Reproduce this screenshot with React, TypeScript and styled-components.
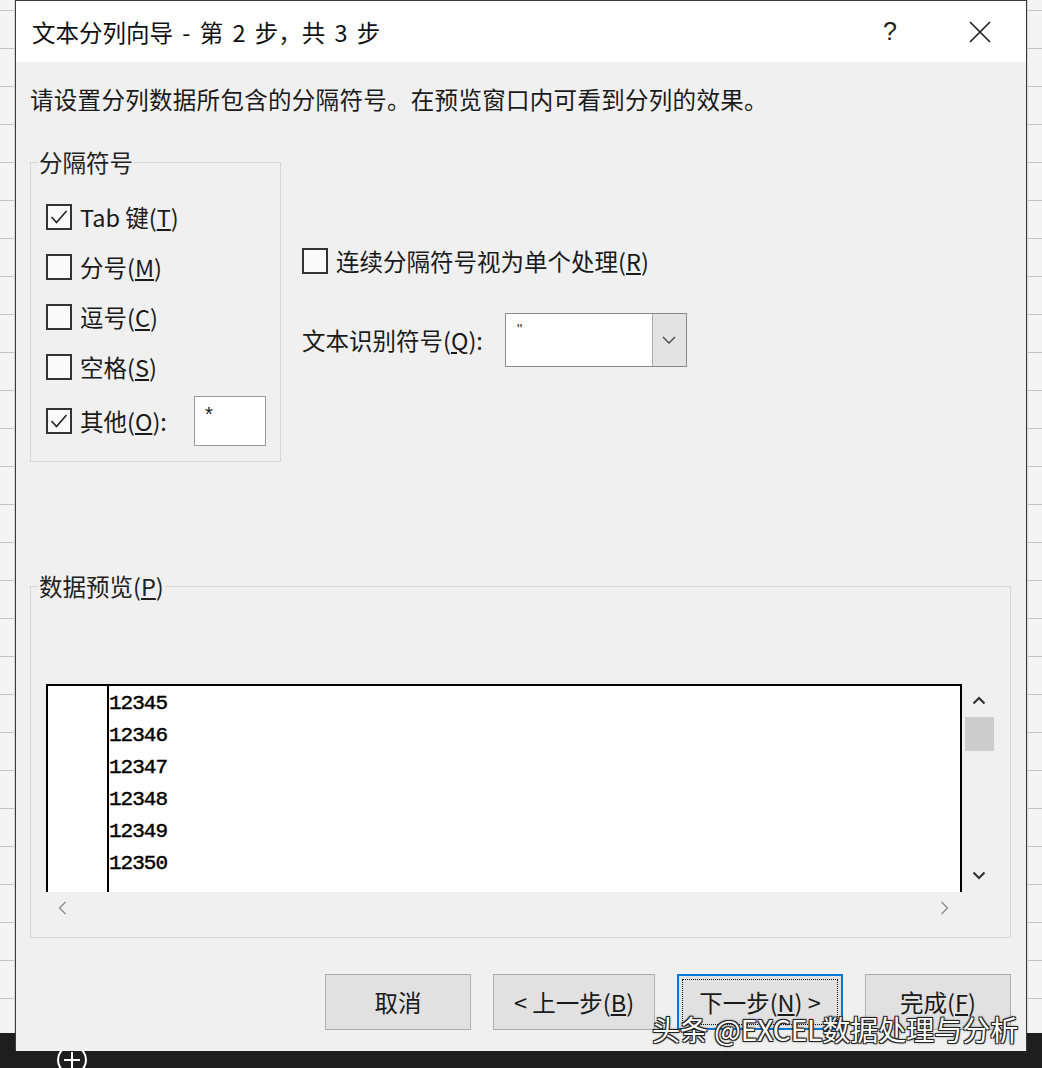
import React from 'react'
import styled, { createGlobalStyle } from 'styled-components'

const CJK = `"Noto Sans CJK SC", "Noto Sans", sans-serif`

const GlobalStyle = createGlobalStyle`
  html, body {
    margin: 0;
    padding: 0;
  }
  body {
    width: 1042px;
    height: 1068px;
    overflow: hidden;
    background: #1e1e1e;
    font-family: ${CJK};
    color: #1a1a1a;
  }
`

const Screen = styled.div`
  position: relative;
  width: 1042px;
  height: 1068px;
  display: flex;
  flex-direction: column;
  overflow: hidden;
`

const Workspace = styled.div`
  display: flex;
  align-items: flex-start;
  height: 1051px;
`

// bits of the spreadsheet grid peeking out on either side of the dialog
const SheetStrip = styled.div<{ $side: 'left' | 'right' }>`
  width: 15px;
  height: 1033px;
  box-sizing: border-box;
  background-color: #f4f4f4;
  background-image: linear-gradient(to bottom, #c4c4c4 0 1px, transparent 1px);
  background-size: 100% 38px;
  background-position: 0 10px;
  ${(p) => (p.$side === 'left' ? 'border-right: 1px solid #d6d6d6;' : 'border-left: 1px solid #d6d6d6;')}
`

const Dialog = styled.div`
  width: 1012px;
  height: 1051px;
  box-sizing: border-box;
  border: 1px solid #3a3a3a;
  border-bottom: none;
  background: #f0f0f0;
  display: flex;
  flex-direction: column;
`

const TitleBar = styled.div`
  height: 61px;
  flex: none;
  background: #fff;
  display: flex;
  align-items: center;
  padding: 0 23px 0 16px;
`

const Title = styled.div`
  font-size: 23.5px;
  line-height: 30px;
  word-spacing: 4px;
  color: #111;
`

const TitleActions = styled.div`
  margin-left: auto;
  display: flex;
  gap: 44px;
`

const TitleButton = styled.div`
  width: 46px;
  height: 40px;
  display: flex;
  align-items: center;
  justify-content: center;
  font-family: "Liberation Sans", sans-serif;
  font-size: 25px;
  color: #222;
`

const Body = styled.div`
  flex: 1;
  display: flex;
  flex-direction: column;
  padding: 0 15px 0 14px;
`

const Intro = styled.div`
  margin-top: 21px;
  font-size: 23.5px;
  line-height: 32px;
  letter-spacing: 0.3px;
  color: #1a1a1a;
`

const TopRow = styled.div`
  display: flex;
  align-items: flex-start;
  margin-top: 33px;
`

const GroupBox = styled.fieldset<{ $width: number }>`
  margin: 0;
  padding: 0;
  min-width: 0;
  width: ${(p) => p.$width}px;
  box-sizing: border-box;
  border: 1px solid #d6d6d6;
`

const GroupLegend = styled.legend`
  margin-left: 7px;
  padding: 0 1px;
  font-size: 23.5px;
  line-height: 28px;
  color: #222;
`

const Options = styled.div`
  padding: 16px 14px 11px 15px;
`

const CheckRow = styled.div<{ $height?: number }>`
  display: flex;
  align-items: center;
  height: ${(p) => p.$height ?? 50}px;
  font-size: 23.5px;
  line-height: 28px;
  color: #1a1a1a;
  white-space: nowrap;
`

const Box = styled.span`
  width: 26px;
  height: 26px;
  flex: none;
  box-sizing: border-box;
  border: 2px solid #333;
  background: #fafafa;
  display: flex;
  align-items: center;
  justify-content: center;
  margin-right: 8px;
`

const OtherField = styled.div`
  margin-left: auto;
  width: 72px;
  height: 50px;
  box-sizing: border-box;
  border: 1px solid #9a9a9a;
  background: #fff;
  padding: 6px 10px;
  font-family: "Liberation Sans", sans-serif;
  font-size: 20px;
  line-height: 22px;
`

const RightCol = styled.div`
  margin-left: 21px;
  padding-top: 93px;
  display: flex;
  flex-direction: column;
`

const FieldRow = styled.div`
  display: flex;
  align-items: center;
  margin-top: 32px;
  font-size: 23.5px;
  line-height: 28px;
  white-space: nowrap;
`

const Combo = styled.div`
  margin-left: 22px;
  width: 182px;
  height: 54px;
  box-sizing: border-box;
  border: 1px solid #8a8a8a;
  background: #fff;
  display: flex;
`

const ComboValue = styled.div`
  flex: 1;
  padding: 6px 0 0 11px;
  font-family: "Liberation Sans", sans-serif;
  font-size: 15px;
  line-height: 18px;
  color: #333;
`

const ComboButton = styled.div`
  width: 33px;
  background: #e3e3e3;
  border-left: 1px solid #a9a9a9;
  display: flex;
  align-items: center;
  justify-content: center;
`

const PreviewBox = styled(GroupBox)`
  margin-top: 110px;
`

const PreviewInner = styled.div`
  padding: 84px 14px 13px 15px;
`

const PreviewFrame = styled.div`
  display: grid;
  grid-template-columns: 916px 34px;
  grid-template-rows: 208px 32px;
`

const DataArea = styled.div`
  box-sizing: border-box;
  border: 2px solid #000;
  border-bottom: none;
  background: #fff;
  display: flex;
  overflow: hidden;
`

const Gutter = styled.div`
  width: 59px;
  flex: none;
  border-right: 2px solid #000;
`

const Values = styled.div`
  padding-top: 2px;
  font-family: "Liberation Mono", monospace;
  font-size: 21px;
  line-height: 32px;
  letter-spacing: -1px;
  -webkit-text-stroke: 0.45px #000;
  color: #000;
`

const VScroll = styled.div`
  display: flex;
  flex-direction: column;
  align-items: center;
`

const ScrollArrow = styled.div<{ $height: number }>`
  height: ${(p) => p.$height}px;
  display: flex;
  align-items: center;
  justify-content: center;
`

const Thumb = styled.div`
  width: 29px;
  height: 34px;
  background: #cdcdcd;
`

const ScrollSpacer = styled.div`
  flex: 1;
`

const HScroll = styled.div`
  display: flex;
  align-items: center;
  justify-content: space-between;
  padding: 0 13px 0 12px;
`

const ButtonRow = styled.div`
  margin-top: 36px;
  display: flex;
  justify-content: flex-end;
  gap: 22px;
`

const Button = styled.div<{ $width: number; $focused?: boolean }>`
  width: ${(p) => p.$width}px;
  height: 56px;
  box-sizing: border-box;
  display: flex;
  background: #e1e1e1;
  border: ${(p) => (p.$focused ? '2px solid #0078d7' : '1px solid #adadad')};
  padding: ${(p) => (p.$focused ? '3px' : '4px')};
  font-size: 23.5px;
  line-height: 28px;
  color: #1a1a1a;
  white-space: nowrap;
`

const ButtonFace = styled.span<{ $focused?: boolean }>`
  flex: 1;
  display: flex;
  align-items: center;
  justify-content: center;
  border: 1px ${(p) => (p.$focused ? 'dotted #111' : 'solid transparent')};
`

const Watermark = styled.div`
  position: absolute;
  left: 652px;
  top: 1012px;
  font-size: 28px;
  line-height: 34px;
  color: #fff;
  white-space: nowrap;
  text-shadow: 1px 1px 0 #222, -1px -1px 0 #222, 1px -1px 0 #222, -1px 1px 0 #222, 0 0 3px #000;
`

const TaskBar = styled.div`
  height: 17px;
  background: #1e1e1e;
  padding-left: 56px;
  display: flex;
`

const Check = () => (
  <svg width="18" height="16" viewBox="0 0 18 16">
    <polyline points="1.5,8 6.5,13.5 16.5,2" fill="none" stroke="#222" strokeWidth="1.6" />
  </svg>
)

const CheckBox = ({ checked }: { checked?: boolean }) => <Box>{checked && <Check />}</Box>

const rows = ['12345', '12346', '12347', '12348', '12349', '12350']

const App = () => {
  return (
    <Screen>
      <GlobalStyle />
      <Workspace>
        <SheetStrip $side="left" />
        <Dialog>
          <TitleBar>
            <Title>文本分列向导 - 第 2 步，共 3 步</Title>
            <TitleActions>
              <TitleButton>?</TitleButton>
              <TitleButton>
                <svg width="22" height="22" viewBox="0 0 22 22">
                  <path d="M1 1 L21 21 M21 1 L1 21" stroke="#1a1a1a" strokeWidth="1.6" />
                </svg>
              </TitleButton>
            </TitleActions>
          </TitleBar>

          <Body>
            <Intro>请设置分列数据所包含的分隔符号。在预览窗口内可看到分列的效果。</Intro>

            <TopRow>
              <GroupBox $width={251}>
                <GroupLegend>分隔符号</GroupLegend>
                <Options>
                  <CheckRow>
                    <CheckBox checked />
                    Tab 键(<u>T</u>)
                  </CheckRow>
                  <CheckRow>
                    <CheckBox />
                    分号(<u>M</u>)
                  </CheckRow>
                  <CheckRow>
                    <CheckBox />
                    逗号(<u>C</u>)
                  </CheckRow>
                  <CheckRow>
                    <CheckBox />
                    空格(<u>S</u>)
                  </CheckRow>
                  <CheckRow $height={58}>
                    <CheckBox checked />
                    其他(<u>O</u>):
                    <OtherField>*</OtherField>
                  </CheckRow>
                </Options>
              </GroupBox>

              <RightCol>
                <CheckRow $height={40}>
                  <CheckBox />
                  连续分隔符号视为单个处理(<u>R</u>)
                </CheckRow>
                <FieldRow>
                  文本识别符号(<u>Q</u>):
                  <Combo>
                    <ComboValue>"</ComboValue>
                    <ComboButton>
                      <svg width="14" height="8" viewBox="0 0 14 8">
                        <polyline points="1,1 7,7 13,1" fill="none" stroke="#444" strokeWidth="1.3" />
                      </svg>
                    </ComboButton>
                  </Combo>
                </FieldRow>
              </RightCol>
            </TopRow>

            <PreviewBox $width={981}>
              <GroupLegend>数据预览(<u>P</u>)</GroupLegend>
              <PreviewInner>
                <PreviewFrame>
                  <DataArea>
                    <Gutter />
                    <Values>
                      {rows.map((r) => (
                        <div key={r}>{r}</div>
                      ))}
                    </Values>
                  </DataArea>
                  <VScroll>
                    <ScrollArrow $height={33}>
                      <svg width="14" height="9" viewBox="0 0 14 9">
                        <polyline points="1.5,7.5 7,2 12.5,7.5" fill="none" stroke="#333" strokeWidth="2.2" />
                      </svg>
                    </ScrollArrow>
                    <Thumb />
                    <ScrollSpacer />
                    <ScrollArrow $height={34}>
                      <svg width="14" height="9" viewBox="0 0 14 9">
                        <polyline points="1.5,1.5 7,7 12.5,1.5" fill="none" stroke="#333" strokeWidth="2.2" />
                      </svg>
                    </ScrollArrow>
                  </VScroll>
                  <HScroll>
                    <svg width="9" height="14" viewBox="0 0 9 14">
                      <polyline points="7.5,1 1.5,7 7.5,13" fill="none" stroke="#8a8a8a" strokeWidth="1.3" />
                    </svg>
                    <svg width="9" height="14" viewBox="0 0 9 14">
                      <polyline points="1.5,1 7.5,7 1.5,13" fill="none" stroke="#8a8a8a" strokeWidth="1.3" />
                    </svg>
                  </HScroll>
                </PreviewFrame>
              </PreviewInner>
            </PreviewBox>

            <ButtonRow>
              <Button $width={146}>
                <ButtonFace>取消</ButtonFace>
              </Button>
              <Button $width={162}>
                <ButtonFace>&lt; 上一步(<u>B</u>)</ButtonFace>
              </Button>
              <Button $width={166} $focused>
                <ButtonFace $focused>下一步(<u>N</u>) &gt;</ButtonFace>
              </Button>
              <Button $width={146}>
                <ButtonFace>完成(<u>F</u>)</ButtonFace>
              </Button>
            </ButtonRow>
          </Body>
        </Dialog>
        <SheetStrip $side="right" />
      </Workspace>

      <TaskBar>
        <svg width="32" height="17" viewBox="0 0 32 17">
          <circle cx="16" cy="9" r="14" fill="none" stroke="#fff" strokeWidth="2" />
          <path d="M16 1 V17 M8 9 H24" stroke="#fff" strokeWidth="2" />
        </svg>
      </TaskBar>

      <Watermark>头条 @EXCEL数据处理与分析</Watermark>
    </Screen>
  )
}

export default App
